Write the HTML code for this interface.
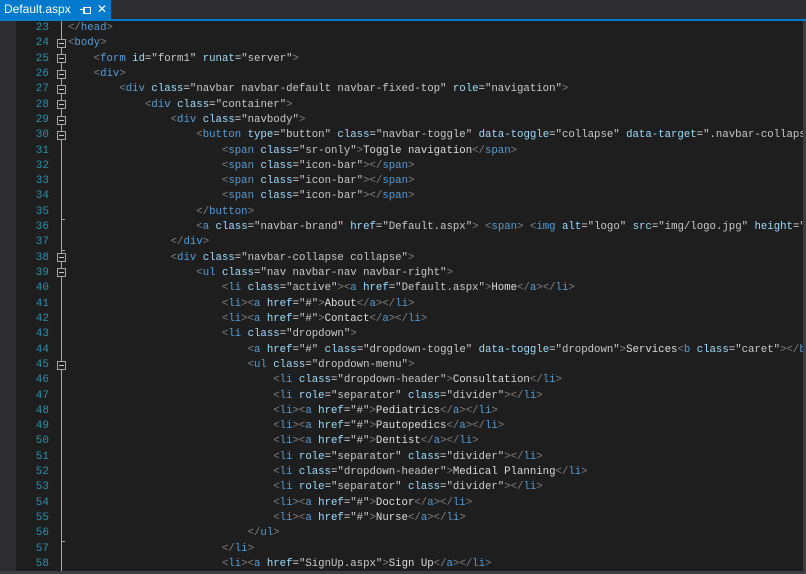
<!DOCTYPE html>
<html><head><meta charset="utf-8"><style>
*{margin:0;padding:0;box-sizing:border-box}
body{width:806px;height:574px;overflow:hidden;background:#1e1e1e;position:relative;font-family:"Liberation Mono",monospace}
#tabbar{position:absolute;left:0;top:0;width:806px;height:19px;background:#2d2d30}
#tab{position:absolute;left:0;top:0;width:111px;height:19px;background:#007acc;color:#fff;font-family:"Liberation Sans",sans-serif;font-size:12px;line-height:19px;padding-left:4px}
#tab .pin{position:absolute;left:80px;top:7px;width:9px;height:5px}
#tab .pin:before{content:"";position:absolute;left:3px;top:0;width:5px;height:5px;border:1px solid #fff;border-left:2px solid #fff}
#tab .pin:after{content:"";position:absolute;left:0;top:2px;width:3px;height:1px;background:#fff}
#tab .x{position:absolute;left:97px;top:0;font-size:12px}
#blue{position:absolute;left:0;top:19px;width:806px;height:2px;background:#007acc}
#left{position:absolute;left:0;top:21px;width:16px;height:553px;background:#2d2d30}
#nums{position:absolute;left:16px;top:21px;width:33px;text-align:right;color:#2b91af;font-size:11px;line-height:15.31px}
#code{position:absolute;left:68px;top:21px;width:735px;height:550px;overflow:hidden;white-space:pre;color:#dcdcdc;font-size:10.7px;line-height:15.31px}
.g{color:#808080}.t{color:#569cd6}.a{color:#9cdcfe}.v{color:#c8c8c8}
#vline{position:absolute;left:61px;top:21px;width:1px;height:550px;background:#a5a5a5}
.box{position:absolute;left:57px;width:9px;height:9px;border:1px solid #a5a5a5;background:#1e1e1e}
.box:after{content:"";position:absolute;left:1px;top:3px;width:5px;height:1px;background:#c8c8c8}
.tick{position:absolute;left:61px;width:4px;height:1px;background:#a5a5a5}
#vs{position:absolute;left:803px;top:21px;width:3px;height:553px;background:#3e3e42}
#hs{position:absolute;left:0;top:571px;width:806px;height:3px;background:#3e3e42}
</style></head><body>
<div id="tabbar"><div id="tab">Default.aspx<span class="pin"></span><span class="x">✕</span></div></div>
<div id="blue"></div>
<div id="left"></div>
<div id="nums">23<br>24<br>25<br>26<br>27<br>28<br>29<br>30<br>31<br>32<br>33<br>34<br>35<br>36<br>37<br>38<br>39<br>40<br>41<br>42<br>43<br>44<br>45<br>46<br>47<br>48<br>49<br>50<br>51<br>52<br>53<br>54<br>55<br>56<br>57<br>58</div>
<div id="vline"></div>
<div class="box" style="top:39px"></div>
<div class="box" style="top:54px"></div>
<div class="box" style="top:70px"></div>
<div class="box" style="top:85px"></div>
<div class="box" style="top:100px"></div>
<div class="box" style="top:116px"></div>
<div class="box" style="top:131px"></div>
<div class="tick" style="top:219px"></div>
<div class="tick" style="top:250px"></div>
<div class="box" style="top:253px"></div>
<div class="box" style="top:268px"></div>
<div class="box" style="top:361px"></div>
<div class="tick" style="top:541px"></div>
<div id="code"><span class="g">&lt;/</span><span class="t">head</span><span class="g">&gt;</span>
<span class="g">&lt;</span><span class="t">body</span><span class="g">&gt;</span>
    <span class="g">&lt;</span><span class="t">form</span> <span class="a">id</span>=<span class="v">"form1"</span> <span class="a">runat</span>=<span class="v">"server"</span><span class="g">&gt;</span>
    <span class="g">&lt;</span><span class="t">div</span><span class="g">&gt;</span>
        <span class="g">&lt;</span><span class="t">div</span> <span class="a">class</span>=<span class="v">"navbar navbar-default navbar-fixed-top"</span> <span class="a">role</span>=<span class="v">"navigation"</span><span class="g">&gt;</span>
            <span class="g">&lt;</span><span class="t">div</span> <span class="a">class</span>=<span class="v">"container"</span><span class="g">&gt;</span>
                <span class="g">&lt;</span><span class="t">div</span> <span class="a">class</span>=<span class="v">"navbody"</span><span class="g">&gt;</span>
                    <span class="g">&lt;</span><span class="t">button</span> <span class="a">type</span>=<span class="v">"button"</span> <span class="a">class</span>=<span class="v">"navbar-toggle"</span> <span class="a">data-toggle</span>=<span class="v">"collapse"</span> <span class="a">data-target</span>=<span class="v">".navbar-collapse"</span><span class="g">&gt;</span>
                        <span class="g">&lt;</span><span class="t">span</span> <span class="a">class</span>=<span class="v">"sr-only"</span><span class="g">&gt;</span>Toggle navigation<span class="g">&lt;/</span><span class="t">span</span><span class="g">&gt;</span>
                        <span class="g">&lt;</span><span class="t">span</span> <span class="a">class</span>=<span class="v">"icon-bar"</span><span class="g">&gt;&lt;/</span><span class="t">span</span><span class="g">&gt;</span>
                        <span class="g">&lt;</span><span class="t">span</span> <span class="a">class</span>=<span class="v">"icon-bar"</span><span class="g">&gt;&lt;/</span><span class="t">span</span><span class="g">&gt;</span>
                        <span class="g">&lt;</span><span class="t">span</span> <span class="a">class</span>=<span class="v">"icon-bar"</span><span class="g">&gt;&lt;/</span><span class="t">span</span><span class="g">&gt;</span>
                    <span class="g">&lt;/</span><span class="t">button</span><span class="g">&gt;</span>
                    <span class="g">&lt;</span><span class="t">a</span> <span class="a">class</span>=<span class="v">"navbar-brand"</span> <span class="a">href</span>=<span class="v">"Default.aspx"</span><span class="g">&gt;</span> <span class="g">&lt;</span><span class="t">span</span><span class="g">&gt;</span> <span class="g">&lt;</span><span class="t">img</span> <span class="a">alt</span>=<span class="v">"logo"</span> <span class="a">src</span>=<span class="v">"img/logo.jpg"</span> <span class="a">height</span>=<span class="v">"50"</span>
                <span class="g">&lt;/</span><span class="t">div</span><span class="g">&gt;</span>
                <span class="g">&lt;</span><span class="t">div</span> <span class="a">class</span>=<span class="v">"navbar-collapse collapse"</span><span class="g">&gt;</span>
                    <span class="g">&lt;</span><span class="t">ul</span> <span class="a">class</span>=<span class="v">"nav navbar-nav navbar-right"</span><span class="g">&gt;</span>
                        <span class="g">&lt;</span><span class="t">li</span> <span class="a">class</span>=<span class="v">"active"</span><span class="g">&gt;&lt;</span><span class="t">a</span> <span class="a">href</span>=<span class="v">"Default.aspx"</span><span class="g">&gt;</span>Home<span class="g">&lt;/</span><span class="t">a</span><span class="g">&gt;&lt;/</span><span class="t">li</span><span class="g">&gt;</span>
                        <span class="g">&lt;</span><span class="t">li</span><span class="g">&gt;&lt;</span><span class="t">a</span> <span class="a">href</span>=<span class="v">"#"</span><span class="g">&gt;</span>About<span class="g">&lt;/</span><span class="t">a</span><span class="g">&gt;&lt;/</span><span class="t">li</span><span class="g">&gt;</span>
                        <span class="g">&lt;</span><span class="t">li</span><span class="g">&gt;&lt;</span><span class="t">a</span> <span class="a">href</span>=<span class="v">"#"</span><span class="g">&gt;</span>Contact<span class="g">&lt;/</span><span class="t">a</span><span class="g">&gt;&lt;/</span><span class="t">li</span><span class="g">&gt;</span>
                        <span class="g">&lt;</span><span class="t">li</span> <span class="a">class</span>=<span class="v">"dropdown"</span><span class="g">&gt;</span>
                            <span class="g">&lt;</span><span class="t">a</span> <span class="a">href</span>=<span class="v">"#"</span> <span class="a">class</span>=<span class="v">"dropdown-toggle"</span> <span class="a">data-toggle</span>=<span class="v">"dropdown"</span><span class="g">&gt;</span>Services<span class="g">&lt;</span><span class="t">b</span> <span class="a">class</span>=<span class="v">"caret"</span><span class="g">&gt;&lt;/</span><span class="t">b</span><span class="g">&gt;&lt;/</span><span class="t">a</span><span class="g">&gt;</span>
                            <span class="g">&lt;</span><span class="t">ul</span> <span class="a">class</span>=<span class="v">"dropdown-menu"</span><span class="g">&gt;</span>
                                <span class="g">&lt;</span><span class="t">li</span> <span class="a">class</span>=<span class="v">"dropdown-header"</span><span class="g">&gt;</span>Consultation<span class="g">&lt;/</span><span class="t">li</span><span class="g">&gt;</span>
                                <span class="g">&lt;</span><span class="t">li</span> <span class="a">role</span>=<span class="v">"separator"</span> <span class="a">class</span>=<span class="v">"divider"</span><span class="g">&gt;&lt;/</span><span class="t">li</span><span class="g">&gt;</span>
                                <span class="g">&lt;</span><span class="t">li</span><span class="g">&gt;&lt;</span><span class="t">a</span> <span class="a">href</span>=<span class="v">"#"</span><span class="g">&gt;</span>Pediatrics<span class="g">&lt;/</span><span class="t">a</span><span class="g">&gt;&lt;/</span><span class="t">li</span><span class="g">&gt;</span>
                                <span class="g">&lt;</span><span class="t">li</span><span class="g">&gt;&lt;</span><span class="t">a</span> <span class="a">href</span>=<span class="v">"#"</span><span class="g">&gt;</span>Pautopedics<span class="g">&lt;/</span><span class="t">a</span><span class="g">&gt;&lt;/</span><span class="t">li</span><span class="g">&gt;</span>
                                <span class="g">&lt;</span><span class="t">li</span><span class="g">&gt;&lt;</span><span class="t">a</span> <span class="a">href</span>=<span class="v">"#"</span><span class="g">&gt;</span>Dentist<span class="g">&lt;/</span><span class="t">a</span><span class="g">&gt;&lt;/</span><span class="t">li</span><span class="g">&gt;</span>
                                <span class="g">&lt;</span><span class="t">li</span> <span class="a">role</span>=<span class="v">"separator"</span> <span class="a">class</span>=<span class="v">"divider"</span><span class="g">&gt;&lt;/</span><span class="t">li</span><span class="g">&gt;</span>
                                <span class="g">&lt;</span><span class="t">li</span> <span class="a">class</span>=<span class="v">"dropdown-header"</span><span class="g">&gt;</span>Medical Planning<span class="g">&lt;/</span><span class="t">li</span><span class="g">&gt;</span>
                                <span class="g">&lt;</span><span class="t">li</span> <span class="a">role</span>=<span class="v">"separator"</span> <span class="a">class</span>=<span class="v">"divider"</span><span class="g">&gt;&lt;/</span><span class="t">li</span><span class="g">&gt;</span>
                                <span class="g">&lt;</span><span class="t">li</span><span class="g">&gt;&lt;</span><span class="t">a</span> <span class="a">href</span>=<span class="v">"#"</span><span class="g">&gt;</span>Doctor<span class="g">&lt;/</span><span class="t">a</span><span class="g">&gt;&lt;/</span><span class="t">li</span><span class="g">&gt;</span>
                                <span class="g">&lt;</span><span class="t">li</span><span class="g">&gt;&lt;</span><span class="t">a</span> <span class="a">href</span>=<span class="v">"#"</span><span class="g">&gt;</span>Nurse<span class="g">&lt;/</span><span class="t">a</span><span class="g">&gt;&lt;/</span><span class="t">li</span><span class="g">&gt;</span>
                            <span class="g">&lt;/</span><span class="t">ul</span><span class="g">&gt;</span>
                        <span class="g">&lt;/</span><span class="t">li</span><span class="g">&gt;</span>
                        <span class="g">&lt;</span><span class="t">li</span><span class="g">&gt;&lt;</span><span class="t">a</span> <span class="a">href</span>=<span class="v">"SignUp.aspx"</span><span class="g">&gt;</span>Sign Up<span class="g">&lt;/</span><span class="t">a</span><span class="g">&gt;&lt;/</span><span class="t">li</span><span class="g">&gt;</span></div>
<div id="vs"></div>
<div id="hs"></div>
</body></html>
